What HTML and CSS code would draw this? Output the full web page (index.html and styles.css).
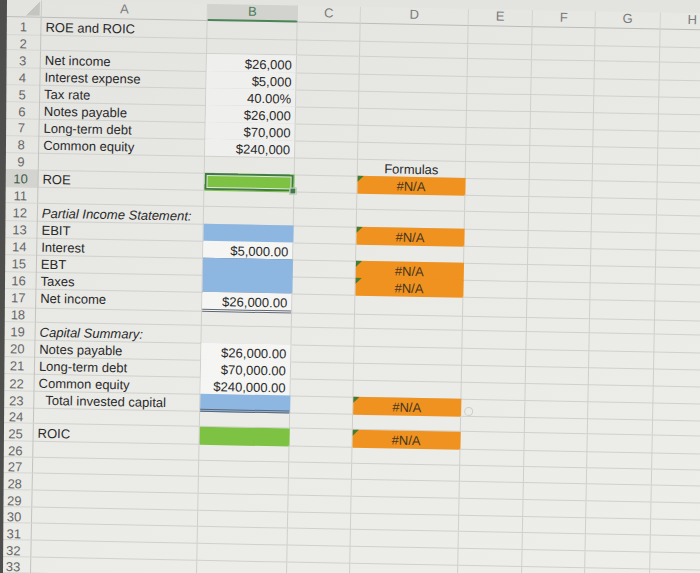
FILE: index.html
```html
<!DOCTYPE html>
<html lang="en">
<head>
<meta charset="utf-8">
<title>ROE and ROIC</title>
<link rel="stylesheet" href="styles.css">
</head>
<body>
<div class="frame">
  <div class="sheet">
    <div class="r hdr"><div class="corner"></div><div class="ch">A</div><div class="ch sel">B</div><div class="ch">C</div><div class="ch">D</div><div class="ch">E</div><div class="ch">F</div><div class="ch">G</div><div class="ch">H</div><div class="ch"></div></div>
    <div class="r"><div class="h">1</div><div class="c">ROE and ROIC</div><div class="c"></div><div class="c"></div><div class="c"></div><div class="c"></div><div class="c"></div><div class="c"></div><div class="c"></div><div class="c"></div></div>
    <div class="r"><div class="h">2</div><div class="c"></div><div class="c"></div><div class="c"></div><div class="c"></div><div class="c"></div><div class="c"></div><div class="c"></div><div class="c"></div><div class="c"></div></div>
    <div class="r"><div class="h">3</div><div class="c">Net income</div><div class="c num lt">$26,000</div><div class="c"></div><div class="c"></div><div class="c"></div><div class="c"></div><div class="c"></div><div class="c"></div><div class="c"></div></div>
    <div class="r"><div class="h">4</div><div class="c">Interest expense</div><div class="c num lt">$5,000</div><div class="c"></div><div class="c"></div><div class="c"></div><div class="c"></div><div class="c"></div><div class="c"></div><div class="c"></div></div>
    <div class="r"><div class="h">5</div><div class="c">Tax rate</div><div class="c num lt">40.00%</div><div class="c"></div><div class="c"></div><div class="c"></div><div class="c"></div><div class="c"></div><div class="c"></div><div class="c"></div></div>
    <div class="r"><div class="h">6</div><div class="c">Notes payable</div><div class="c num lt">$26,000</div><div class="c"></div><div class="c"></div><div class="c"></div><div class="c"></div><div class="c"></div><div class="c"></div><div class="c"></div></div>
    <div class="r"><div class="h">7</div><div class="c">Long-term debt</div><div class="c num lt">$70,000</div><div class="c"></div><div class="c"></div><div class="c"></div><div class="c"></div><div class="c"></div><div class="c"></div><div class="c"></div></div>
    <div class="r"><div class="h">8</div><div class="c">Common equity</div><div class="c num lt">$240,000</div><div class="c"></div><div class="c"></div><div class="c"></div><div class="c"></div><div class="c"></div><div class="c"></div><div class="c"></div></div>
    <div class="r"><div class="h">9</div><div class="c"></div><div class="c"></div><div class="c"></div><div class="c ctr">Formulas</div><div class="c"></div><div class="c"></div><div class="c"></div><div class="c"></div><div class="c"></div></div>
    <div class="r"><div class="h hsel">10</div><div class="c">ROE</div><div class="c green active"></div><div class="c"></div><div class="c err">#N/A</div><div class="c"></div><div class="c"></div><div class="c"></div><div class="c"></div><div class="c"></div></div>
    <div class="r m"><div class="h">11</div><div class="c"></div><div class="c"></div><div class="c"></div><div class="c"></div><div class="c"></div><div class="c"></div><div class="c"></div><div class="c"></div><div class="c"></div></div>
    <div class="r m"><div class="h">12</div><div class="c it">Partial Income Statement:</div><div class="c"></div><div class="c"></div><div class="c"></div><div class="c"></div><div class="c"></div><div class="c"></div><div class="c"></div><div class="c"></div></div>
    <div class="r m"><div class="h">13</div><div class="c">EBIT</div><div class="c blue"></div><div class="c"></div><div class="c err">#N/A</div><div class="c"></div><div class="c"></div><div class="c"></div><div class="c"></div><div class="c"></div></div>
    <div class="r m"><div class="h">14</div><div class="c">Interest</div><div class="c num wh rule">$5,000.00</div><div class="c"></div><div class="c"></div><div class="c"></div><div class="c"></div><div class="c"></div><div class="c"></div><div class="c"></div></div>
    <div class="r m"><div class="h">15</div><div class="c">EBT</div><div class="c blue join"></div><div class="c"></div><div class="c err join">#N/A</div><div class="c"></div><div class="c"></div><div class="c"></div><div class="c"></div><div class="c"></div></div>
    <div class="r m"><div class="h">16</div><div class="c">Taxes</div><div class="c blue rule"></div><div class="c"></div><div class="c err">#N/A</div><div class="c"></div><div class="c"></div><div class="c"></div><div class="c"></div><div class="c"></div></div>
    <div class="r m"><div class="h">17</div><div class="c">Net income</div><div class="c num wh dbl">$26,000.00</div><div class="c"></div><div class="c"></div><div class="c"></div><div class="c"></div><div class="c"></div><div class="c"></div><div class="c"></div></div>
    <div class="r m"><div class="h">18</div><div class="c"></div><div class="c"></div><div class="c"></div><div class="c"></div><div class="c"></div><div class="c"></div><div class="c"></div><div class="c"></div><div class="c"></div></div>
    <div class="r m"><div class="h">19</div><div class="c it">Capital Summary:</div><div class="c"></div><div class="c"></div><div class="c"></div><div class="c"></div><div class="c"></div><div class="c"></div><div class="c"></div><div class="c"></div></div>
    <div class="r m"><div class="h">20</div><div class="c">Notes payable</div><div class="c num wh">$26,000.00</div><div class="c"></div><div class="c"></div><div class="c"></div><div class="c"></div><div class="c"></div><div class="c"></div><div class="c"></div></div>
    <div class="r m"><div class="h">21</div><div class="c">Long-term debt</div><div class="c num wh">$70,000.00</div><div class="c"></div><div class="c"></div><div class="c"></div><div class="c"></div><div class="c"></div><div class="c"></div><div class="c"></div></div>
    <div class="r m"><div class="h">22</div><div class="c">Common equity</div><div class="c num wh">$240,000.00</div><div class="c"></div><div class="c"></div><div class="c"></div><div class="c"></div><div class="c"></div><div class="c"></div><div class="c"></div></div>
    <div class="r s"><div class="h">23</div><div class="c ind">Total invested capital</div><div class="c blue dbl"></div><div class="c"></div><div class="c err">#N/A</div><div class="c ring"></div><div class="c"></div><div class="c"></div><div class="c"></div><div class="c"></div></div>
    <div class="r s"><div class="h">24</div><div class="c"></div><div class="c"></div><div class="c"></div><div class="c"></div><div class="c"></div><div class="c"></div><div class="c"></div><div class="c"></div><div class="c"></div></div>
    <div class="r s"><div class="h">25</div><div class="c">ROIC</div><div class="c green"></div><div class="c"></div><div class="c err">#N/A</div><div class="c"></div><div class="c"></div><div class="c"></div><div class="c"></div><div class="c"></div></div>
    <div class="r s"><div class="h">26</div><div class="c"></div><div class="c"></div><div class="c"></div><div class="c"></div><div class="c"></div><div class="c"></div><div class="c"></div><div class="c"></div><div class="c"></div></div>
    <div class="r s"><div class="h">27</div><div class="c"></div><div class="c"></div><div class="c"></div><div class="c"></div><div class="c"></div><div class="c"></div><div class="c"></div><div class="c"></div><div class="c"></div></div>
    <div class="r s"><div class="h">28</div><div class="c"></div><div class="c"></div><div class="c"></div><div class="c"></div><div class="c"></div><div class="c"></div><div class="c"></div><div class="c"></div><div class="c"></div></div>
    <div class="r s"><div class="h">29</div><div class="c"></div><div class="c"></div><div class="c"></div><div class="c"></div><div class="c"></div><div class="c"></div><div class="c"></div><div class="c"></div><div class="c"></div></div>
    <div class="r s"><div class="h">30</div><div class="c"></div><div class="c"></div><div class="c"></div><div class="c"></div><div class="c"></div><div class="c"></div><div class="c"></div><div class="c"></div><div class="c"></div></div>
    <div class="r s"><div class="h">31</div><div class="c"></div><div class="c"></div><div class="c"></div><div class="c"></div><div class="c"></div><div class="c"></div><div class="c"></div><div class="c"></div><div class="c"></div></div>
    <div class="r s"><div class="h">32</div><div class="c"></div><div class="c"></div><div class="c"></div><div class="c"></div><div class="c"></div><div class="c"></div><div class="c"></div><div class="c"></div><div class="c"></div></div>
    <div class="r s"><div class="h">33</div><div class="c"></div><div class="c"></div><div class="c"></div><div class="c"></div><div class="c"></div><div class="c"></div><div class="c"></div><div class="c"></div><div class="c"></div></div>
    <div class="r s"><div class="h"></div><div class="c"></div><div class="c"></div><div class="c"></div><div class="c"></div><div class="c"></div><div class="c"></div><div class="c"></div><div class="c"></div><div class="c"></div></div>
    <div class="r s"><div class="h"></div><div class="c"></div><div class="c"></div><div class="c"></div><div class="c"></div><div class="c"></div><div class="c"></div><div class="c"></div><div class="c"></div><div class="c"></div></div>
  </div>
</div>
</body>
</html>
```
FILE: styles.css
```css
* { box-sizing: border-box; }

html, body {
  margin: 0;
  padding: 0;
  background: #e5e5e2;
}

.frame {
  position: relative;
  width: 700px;
  height: 573px;
  overflow: hidden;
  padding-left: 5px;
  background: #e3e3e0;
}

/* dark window edge at the far left, narrowing towards the bottom */
.frame::before {
  content: "";
  position: absolute;
  left: 0;
  top: 0;
  width: 7px;
  height: 100%;
  background: #4e4e4d;
  clip-path: polygon(0 0, 7px 0, 3px 100%, 0 100%);
  z-index: 5;
}

.sheet {
  width: 820px;
  transform: rotate(1.1deg);
  transform-origin: 0 0;
  background: linear-gradient(160deg, #e3e3e0 0%, #eaeae7 45%, #eeeeeb 100%);
  font-family: "Liberation Sans", Arial, sans-serif;
  font-size: 13px;
  color: #2a2a2a;
}

.r {
  display: grid;
  grid-template-columns: 37px 166px 90px 63px 108px 64px 63px 65px 64px 1fr;
  height: 16.9px;
}

.r.m { height: 17.06px; }
.r.s { height: 16.68px; }

.r.hdr { height: 16.6px; }

.corner {
  border-right: 1px solid #c9c9c5;
  border-bottom: 1px solid #bdbdb9;
  background: linear-gradient(135deg, transparent 50%, #c4c4c0 50%) right 1px bottom 1px / 14px 14px no-repeat;
}

.ch {
  border-right: 1px solid #d3d3cf;
  border-bottom: 1px solid #bcbcb8;
  text-align: center;
  line-height: 13px;
  color: #7b7b7b;
  font-size: 13px;
}

.ch.sel {
  background: #d2d3ce;
  border-bottom: 2px solid #4a8457;
  color: #4b7b58;
}

.h {
  border-right: 1px solid #c3c3bf;
  border-bottom: 1px solid #d6d6d2;
  text-align: center;
  padding: 4.5px 0 0 2px;
  line-height: 11px;
  color: #666;
}

.h.hsel {
  background: #d3d4cf;
  color: #3f5d46;
}

.c {
  border-right: 1px solid #cfcfcb;
  border-bottom: 1px solid #d0d0cc;
  padding: 3px 4px 0 4px;
  line-height: 14px;
  white-space: nowrap;
  position: relative;
}

.num { text-align: right; }
.ctr { text-align: center; }
.it { font-style: italic; }
.ind { padding-left: 11px; }

.lt { background: #efefed; }

.wh {
  background: #f5f5f3;
  border-bottom-color: #ecece9;
}

.green {
  background: #7ec243;
  border-color: transparent;
}

.green.active {
  box-shadow: inset 0 0 0 2px #3f7a47, inset 0 0 0 3px #dfe9d7;
  z-index: 2;
}

.green.active::after {
  content: "";
  position: absolute;
  right: -3px;
  bottom: -3px;
  width: 5px;
  height: 5px;
  background: #3f7a47;
  border: 1px solid #ecece9;
}

.blue {
  background: #8db6e1;
  border-right-color: transparent;
  border-bottom-color: #8db6e1;
}

.rule { border-bottom: 1px solid #505d70; }

.dbl { border-bottom: 3px double #5f6672; }

.join { border-bottom-color: transparent; }

.err {
  background: #f0921f;
  border-color: transparent;
  text-align: center;
  color: #4a3821;
}

.err.join { border-bottom-color: #f0921f; }

.err::before {
  content: "";
  position: absolute;
  left: 0;
  top: 0;
  border-top: 6px solid #3f7d3c;
  border-right: 6px solid transparent;
}

.ring::before {
  content: "";
  position: absolute;
  left: 3px;
  top: 8px;
  width: 7px;
  height: 7px;
  border: 1px solid #cdcdca;
  border-radius: 50%;
}
```
